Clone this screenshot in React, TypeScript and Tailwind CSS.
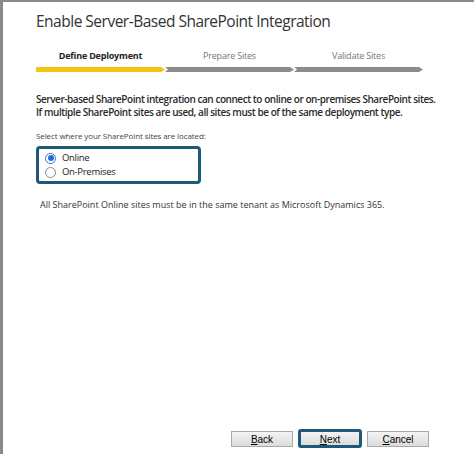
import { useState } from 'react';

const STEPS = ['Define Deployment', 'Prepare Sites', 'Validate Sites'];

// One chevron segment of the wizard progress strip
function StepBar({ active, first }: { active: boolean; first: boolean }) {
  const notch = first ? 'M0,0' : 'M0,0 L3,2.5';
  return (
    <svg width="129" height="5" viewBox="0 0 129 5" className="block">
      <path
        d={`${notch} L0,0 L125,0 L129,2.5 L125,5 L0,5 ${first ? '' : 'L3,2.5'} Z`}
        fill={active ? '#f2c512' : '#8c8c8c'}
      />
    </svg>
  );
}

function Radio({ checked, label, onClick }: { checked: boolean; label: string; onClick: () => void }) {
  return (
    <label className="flex items-center gap-[6px] h-[15px] cursor-pointer" onClick={onClick}>
      <span
        className={`w-[11px] h-[11px] rounded-full border flex items-center justify-center ${
          checked ? 'border-[#2a7ad3]' : 'border-[#8a8a8a]'
        }`}
      >
        {checked && <span className="w-[6px] h-[6px] rounded-full bg-[#1f6fd1]" />}
      </span>
      <span className="text-[9.5px] tracking-[-0.3px] text-[#222]">{label}</span>
    </label>
  );
}

function WizardButton({ label, hot, focused }: { label: string; hot: string; focused?: boolean }) {
  const rest = label.slice(1);
  return (
    <button
      className={`text-[10px] text-black bg-gradient-to-b from-[#f4f4f4] to-[#dcdcdc] ${
        focused ? 'border-[3px] border-[#1d5a7a] rounded-[3px] h-[19px] w-[64px]' : 'border border-[#a9a9a9] h-[16px] w-[62px]'
      }`}
      style={{ fontFamily: '"Liberation Sans", Arial, sans-serif' }}
    >
      <span className="underline">{hot}</span>
      {rest}
    </button>
  );
}

export default function App() {
  const [site, setSite] = useState<'online' | 'onprem'>('online');

  return (
    <div
      className="w-[474px] h-[454px] bg-white border-t-2 border-l-[3px] border-[#8a8a8a] overflow-hidden"
      style={{ fontFamily: '"Open Sans", "Noto Sans", sans-serif' }}
    >
      <div className="pl-[33px] pt-[7px]">
        <h1 className="text-[15.5px] text-[#333] leading-[24px] tracking-[-0.5px]">
          Enable Server-Based SharePoint Integration
        </h1>

        <div className="mt-[17px] flex">
          {STEPS.map((s, i) => (
            <div key={s} className="w-[129px] flex flex-col items-center">
              <span
                className={`text-[9px] leading-[12px] tracking-[-0.2px] ${
                  i === 0 ? 'font-bold text-[#222]' : 'text-[#777]'
                }`}
              >
                {s}
              </span>
              <div className="mt-[5px]">
                <StepBar active={i === 0} first={i === 0} />
              </div>
            </div>
          ))}
        </div>

        <div className="mt-[21px] text-[10px] leading-[13px] font-semibold text-[#2b2b2b] tracking-[-0.45px]">
          <p>Server-based SharePoint integration can connect to online or on-premises SharePoint sites.</p>
          <p>If multiple SharePoint sites are used, all sites must be of the same deployment type.</p>
        </div>

        <p className="mt-[11px] text-[8px] leading-[12px] tracking-[-0.1px] text-[#444]">
          Select where your SharePoint sites are located:
        </p>

        <div className="mt-[4px] w-[165px] h-[38px] border-[3px] border-[#1d5a7a] rounded-[4px] px-[6px] py-[2px] flex flex-col">
          <Radio checked={site === 'online'} label="Online" onClick={() => setSite('online')} />
          <Radio checked={site === 'onprem'} label="On-Premises" onClick={() => setSite('onprem')} />
        </div>

        <p className="mt-[14px] ml-[4px] text-[9px] leading-[13px] text-[#333]">
          All SharePoint Online sites must be in the same tenant as Microsoft Dynamics 365.
        </p>
      </div>

      <div className="mt-[218px] flex items-center justify-end gap-[5px] pr-[45px]">
        <WizardButton label="Back" hot="B" />
        <WizardButton label="Next" hot="N" focused />
        <WizardButton label="Cancel" hot="C" />
      </div>
    </div>
  );
}
